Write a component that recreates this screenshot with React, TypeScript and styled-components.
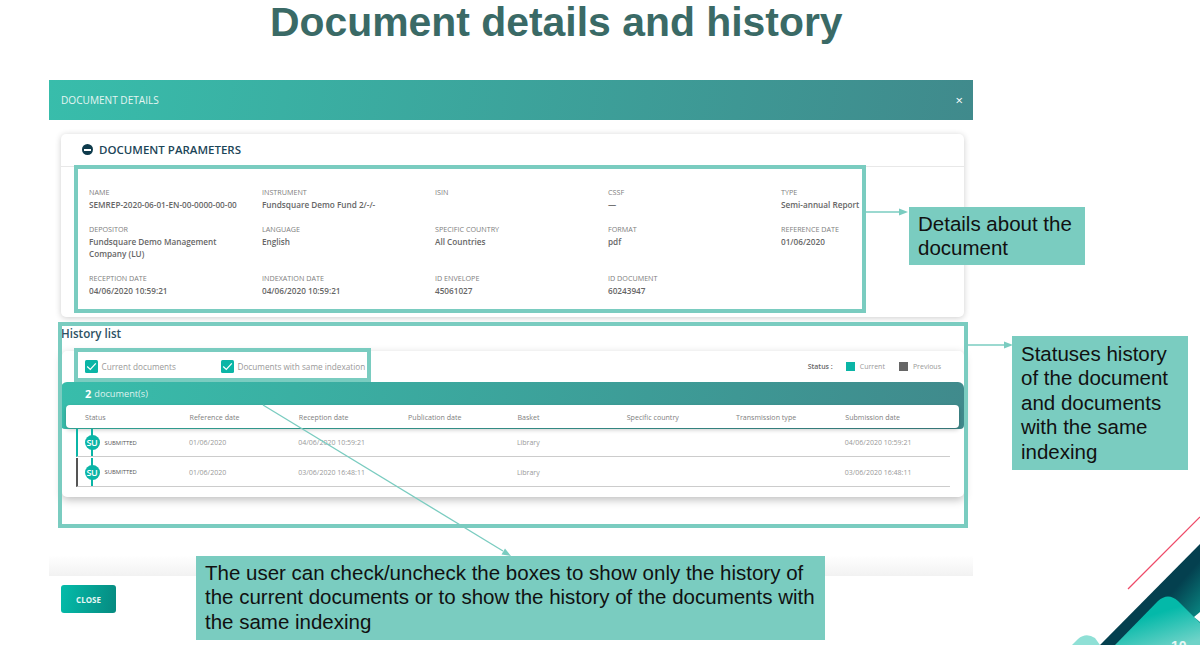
import * as React from "react";
import styled, { createGlobalStyle } from "styled-components";

const GlobalStyle = createGlobalStyle`
  html, body {
    margin: 0;
    padding: 0;
    background: #fff;
  }
  body {
    font-family: "Open Sans", "Liberation Sans", sans-serif;
  }
`;

const parameters = [
  { label: "NAME", value: "SEMREP-2020-06-01-EN-00-0000-00-00" },
  { label: "INSTRUMENT", value: "Fundsquare Demo Fund 2/-/-" },
  { label: "ISIN", value: "" },
  { label: "CSSF", value: "—" },
  { label: "TYPE", value: "Semi-annual Report" },
  { label: "DEPOSITOR", value: "Fundsquare Demo Management Company (LU)" },
  { label: "LANGUAGE", value: "English" },
  { label: "SPECIFIC COUNTRY", value: "All Countries" },
  { label: "FORMAT", value: "pdf" },
  { label: "REFERENCE DATE", value: "01/06/2020" },
  { label: "RECEPTION DATE", value: "04/06/2020 10:59:21" },
  { label: "INDEXATION DATE", value: "04/06/2020 10:59:21" },
  { label: "ID ENVELOPE", value: "45061027" },
  { label: "ID DOCUMENT", value: "60243947" },
];

const columns = [
  "Status",
  "Reference date",
  "Reception date",
  "Publication date",
  "Basket",
  "Specific country",
  "Transmission type",
  "Submission date",
];

const rows = [
  { current: true, reception: "04/06/2020 10:59:21", submission: "04/06/2020 10:59:21" },
  { current: false, reception: "03/06/2020 16:48:11", submission: "03/06/2020 16:48:11" },
];

const Check = () => (
  <CheckBox>
    <svg width="13" height="13" viewBox="0 0 13 13" fill="none">
      <path d="M2.200 6.500 L5.300 9.500 L10.800 3.400" stroke="#fff" strokeWidth="1.2" />
    </svg>
  </CheckBox>
);

export default function App() {
  return (
    <>
      <GlobalStyle />
      <Slide>
        <Title>Document details and history</Title>

        <Modal>
          <ModalHeader>
            <span>DOCUMENT DETAILS</span>
            <CloseX>×</CloseX>
          </ModalHeader>

          <ModalBody>
            <Card>
              <CardHead>
                <MinusIcon />
                <CardTitle>DOCUMENT PARAMETERS</CardTitle>
              </CardHead>
              <ParamGrid>
                {parameters.map((p) => (
                  <Param key={p.label}>
                    <ParamLabel>{p.label}</ParamLabel>
                    <ParamValue>{p.value}</ParamValue>
                  </Param>
                ))}
              </ParamGrid>
            </Card>

            <SectionTitle>History list</SectionTitle>

            <HistoryCard>
              <Filters>
                <FilterItem $width={136}>
                  <Check />
                  Current documents
                </FilterItem>
                <FilterItem $width={200}>
                  <Check />
                  Documents with same indexation
                </FilterItem>
                <Legend>
                  <strong>Status :</strong>
                  <LegendItem $color="#0bb5a6">Current</LegendItem>
                  <LegendItem $color="#666">Previous</LegendItem>
                </Legend>
              </Filters>

              <TableBand>
                <BandTitle>
                  <b>2</b> document(s)
                </BandTitle>
                <TableHead>
                  {columns.map((c) => (
                    <span key={c}>{c}</span>
                  ))}
                </TableHead>
              </TableBand>

              <Rows>
                {rows.map((r) => (
                  <Row key={r.reception} $current={r.current}>
                    <StatusCell>
                      <Badge>SU</Badge>
                      <StatusText>SUBMITTED</StatusText>
                    </StatusCell>
                    <span>01/06/2020</span>
                    <span>{r.reception}</span>
                    <span />
                    <span>Library</span>
                    <span />
                    <span />
                    <span>{r.submission}</span>
                  </Row>
                ))}
              </Rows>
            </HistoryCard>
          </ModalBody>

          <ModalFooter>
            <CloseButton>CLOSE</CloseButton>
          </ModalFooter>
        </Modal>

        {/* annotations sit on top of the screenshot */}
        <Frame $x={74} $y={165} $w={792} $h={148} />
        <Frame $x={58} $y={322} $w={910} $h={206} />
        <Frame $x={74} $y={348} $w={297} $h={34} />

        <Connectors width="1200" height="645" viewBox="0 0 1200 645">
          <path d="M865 212 H900" stroke="#7accc0" strokeWidth="1.5" />
          <path d="M908 212 L899 208.500 V215.500 Z" fill="#7accc0" />
          <path d="M968 345 H1005" stroke="#7accc0" strokeWidth="1.5" />
          <path d="M1013 345 L1004 341.500 V348.500 Z" fill="#7accc0" />
          <path d="M263 405 L503 551" stroke="#7accc0" strokeWidth="1.3" />
          <path d="M511 556 L501.500 554.500 L505 548.500 Z" fill="#7accc0" />
        </Connectors>

        <Callout $x={909} $y={207} $w={176} $h={58} $top={5}>
          Details about the document
        </Callout>
        <Callout $x={1012} $y={336} $w={176} $h={134} $top={6}>
          Statuses history of the document and documents with the same indexing
        </Callout>
        <Callout $x={196} $y={556} $w={629} $h={84} $top={5}>
          The user can check/uncheck the boxes to show only the history of the current documents or to show the history of the documents with the same indexing
        </Callout>

        <Corner width="160" height="145" viewBox="0 0 160 145">
          <defs>
            <linearGradient id="darkFade" x1="0.55" y1="0.35" x2="1" y2="0.75">
              <stop offset="0.35" stopColor="#04404f" />
              <stop offset="1" stopColor="#0a8c86" />
            </linearGradient>
            <linearGradient id="tealFade" x1="0.3" y1="0.1" x2="0.8" y2="1">
              <stop offset="0.3" stopColor="#04b9a9" />
              <stop offset="1" stopColor="#6fd3c8" />
            </linearGradient>
          </defs>
          <path d="M88 89 L160 17" stroke="#ee4a68" strokeWidth="1.2" />
          <path d="M160 44 L60 145 H160 Z" fill="url(#darkFade)" />
          <path d="M75 145 L118 101 Q128 92 138 101 L160 123 V145 Z" fill="url(#tealFade)" />
          <path d="M32 145 L38 139 Q46 132 55 138 L60 145 Z" fill="#8fe0d6" />
          <path d="M160 112 L154 117 L160 122 Z" fill="#fff" />
        </Corner>
        <PageNumber>10</PageNumber>
      </Slide>
    </>
  );
}

const Slide = styled.div`
  position: relative;
  width: 1200px;
  height: 645px;
  overflow: hidden;
  background: #fff;
`;

const Title = styled.h1`
  margin: 0 0 0 270px;
  height: 80px;
  font-family: "Liberation Sans", Arial, sans-serif;
  font-size: 40.900px;
  line-height: 44px;
  font-weight: 700;
  color: #3a6a66;
  white-space: nowrap;
`;

const Modal = styled.div`
  width: 924px;
  margin-left: 49px;
`;

const ModalHeader = styled.div`
  height: 40px;
  padding: 0 10px 0 12px;
  display: flex;
  align-items: center;
  justify-content: space-between;
  font-size: 10.100px;
  font-weight: 500;
  color: #e4f5f2;
  background: linear-gradient(100deg, #38bdab 0%, #408a8c 100%);
`;

const CloseX = styled.span`
  font-size: 13px;
  color: #fff;
`;

const ModalBody = styled.div`
  height: 456px;
  padding: 14px 9px 0 12px;
  box-sizing: border-box;
  background: linear-gradient(#fff 0, #fff 435px, #f2f2f2 100%);
`;

const Card = styled.section`
  height: 183px;
  border-radius: 5px;
  background: #fff;
  box-shadow: 0 1px 6px rgba(0, 0, 0, 0.2);
`;

const CardHead = styled.div`
  height: 33px;
  box-sizing: border-box;
  padding: 0 0 1px 21px;
  display: flex;
  align-items: center;
  gap: 6px;
  border-bottom: 1px solid #e8e8e8;
`;

const MinusIcon = styled.span`
  position: relative;
  width: 11px;
  height: 11px;
  border-radius: 50%;
  background: #0e3b4c;

  &::after {
    content: "";
    position: absolute;
    left: 2px;
    right: 2px;
    top: 4.500px;
    height: 2px;
    background: #fff;
  }
`;

const CardTitle = styled.span`
  font-size: 11.500px;
  font-weight: 600;
  color: #1c4558;
`;

const ParamGrid = styled.div`
  padding: 19px 0 0 28px;
  display: grid;
  grid-template-columns: repeat(5, 173px);
  grid-template-rows: 37px 49px 30px;
`;

const Param = styled.div`
  display: flex;
  flex-direction: column;
`;

const ParamLabel = styled.span`
  font-size: 7.200px;
  line-height: 12.600px;
  color: #808080;
`;

const ParamValue = styled.span`
  width: 160px;
  font-size: 8.200px;
  line-height: 12.300px;
  font-weight: 600;
  color: #666;
`;

const SectionTitle = styled.h2`
  margin: 9px 0 0;
  height: 25px;
  font-size: 11.600px;
  line-height: 15px;
  font-weight: 600;
  color: #2d5163;
`;

const HistoryCard = styled.section`
  height: 146px;
  margin-left: 1px;
  border-radius: 5px;
  background: #fff;
  box-shadow: 0 3px 9px rgba(0, 0, 0, 0.25);
`;

const Filters = styled.div`
  height: 31px;
  padding: 0 23px;
  display: flex;
  align-items: center;
`;

const FilterItem = styled.label<{ $width: number }>`
  width: ${(p) => p.$width}px;
  display: flex;
  align-items: center;
  gap: 3.500px;
  font-size: 8.200px;
  color: #999;
  white-space: nowrap;
`;

const CheckBox = styled.span`
  width: 13px;
  height: 13px;
  flex: none;
  border-radius: 1.500px;
  background: #0bb5a6;
`;

const Legend = styled.div`
  margin-left: auto;
  display: flex;
  align-items: center;
  font-size: 7px;
  color: #999;

  strong {
    font-weight: 600;
    color: #666;
    margin-right: 13px;
  }
`;

const LegendItem = styled.span<{ $color: string }>`
  display: flex;
  align-items: center;
  gap: 5px;
  margin-right: 14px;

  &:last-child {
    margin-right: 0;
  }

  &::before {
    content: "";
    width: 9px;
    height: 9px;
    background: ${(p) => p.$color};
  }
`;

const TableBand = styled.div`
  margin-left: -1px;
  height: 47px;
  border-radius: 6px 6px 4px 4px;
  background: linear-gradient(100deg, #38bdab 0%, #408a8c 100%);
`;

const BandTitle = styled.div`
  height: 23px;
  padding-left: 24px;
  display: flex;
  align-items: center;
  gap: 3px;
  font-size: 9.200px;
  font-weight: 500;
  color: #dff3ef;

  b {
    font-size: 11px;
    color: #fff;
  }
`;

const cellGrid = `
  display: grid;
  grid-template-columns: 104.500px 109.300px 109.300px 109.300px 109.300px 109.300px 109.300px 1fr;
`;

const TableHead = styled.div`
  ${cellGrid}
  align-items: center;
  height: 23px;
  box-sizing: border-box;
  margin: 0 5px;
  padding: 1px 0 0 19px;
  border-radius: 4px;
  background: #fff;
  box-shadow: 0 2px 4px rgba(0, 0, 0, 0.2);
  font-size: 7.100px;
  color: #808080;
`;

const Rows = styled.div`
  padding: 0 14px;
`;

const Row = styled.div<{ $current: boolean }>`
  ${cellGrid}
  align-items: center;
  box-sizing: border-box;
  height: ${(p) => (p.$current ? 28 : 29)}px;
  margin-top: ${(p) => (p.$current ? 0 : 1)}px;
  padding-left: 6.500px;
  border-left: 2px solid ${(p) => (p.$current ? "#0bb5a6" : "#555")};
  border-bottom: 1px solid #ccc;
  font-size: 7px;
  color: #999;
`;

const StatusCell = styled.span`
  position: relative;
  display: flex;
  align-items: center;
  gap: 5px;
  height: 100%;

  &::before {
    content: "";
    position: absolute;
    left: 6.700px;
    top: 0;
    bottom: 0;
    width: 1.500px;
    background: #0bb5a6;
  }
`;

const Badge = styled.span`
  position: relative;
  width: 15px;
  height: 15px;
  border-radius: 50%;
  display: flex;
  align-items: center;
  justify-content: center;
  background: #0bb5a6;
  color: #fff;
  font-size: 9px;
  font-weight: 600;
  letter-spacing: -0.3px;
`;

const StatusText = styled.span`
  font-size: 5.900px;
  color: #555;
`;

const ModalFooter = styled.div`
  padding: 9px 12px;
`;

const CloseButton = styled.button`
  width: 55px;
  height: 28px;
  padding: 0;
  border: 0;
  border-radius: 3px;
  background: linear-gradient(100deg, #04bcaa 0%, #068a80 100%);
  font-family: inherit;
  font-size: 8px;
  font-weight: 700;
  color: #e6f7f5;
`;

const Frame = styled.div<{ $x: number; $y: number; $w: number; $h: number }>`
  position: absolute;
  left: ${(p) => p.$x}px;
  top: ${(p) => p.$y}px;
  width: ${(p) => p.$w}px;
  height: ${(p) => p.$h}px;
  box-sizing: border-box;
  border: 4px solid #7accc0;
  pointer-events: none;
`;

const Connectors = styled.svg`
  position: absolute;
  left: 0;
  top: 0;
  pointer-events: none;
`;

const Callout = styled.div<{ $x: number; $y: number; $w: number; $h: number; $top: number }>`
  position: absolute;
  left: ${(p) => p.$x}px;
  top: ${(p) => p.$y}px;
  width: ${(p) => p.$w}px;
  height: ${(p) => p.$h}px;
  box-sizing: border-box;
  padding: ${(p) => p.$top}px 9px 0;
  background: #7accc0;
  font-family: "Liberation Sans", Arial, sans-serif;
  font-size: 20.500px;
  line-height: 24.400px;
  color: #111;
`;

const Corner = styled.svg`
  position: absolute;
  right: 0;
  bottom: 0;
`;

const PageNumber = styled.span`
  position: absolute;
  left: 1171px;
  top: 639px;
  font-family: "Liberation Sans", Arial, sans-serif;
  font-size: 14px;
  font-weight: 700;
  line-height: 15px;
  color: #e8f8f6;
`;
